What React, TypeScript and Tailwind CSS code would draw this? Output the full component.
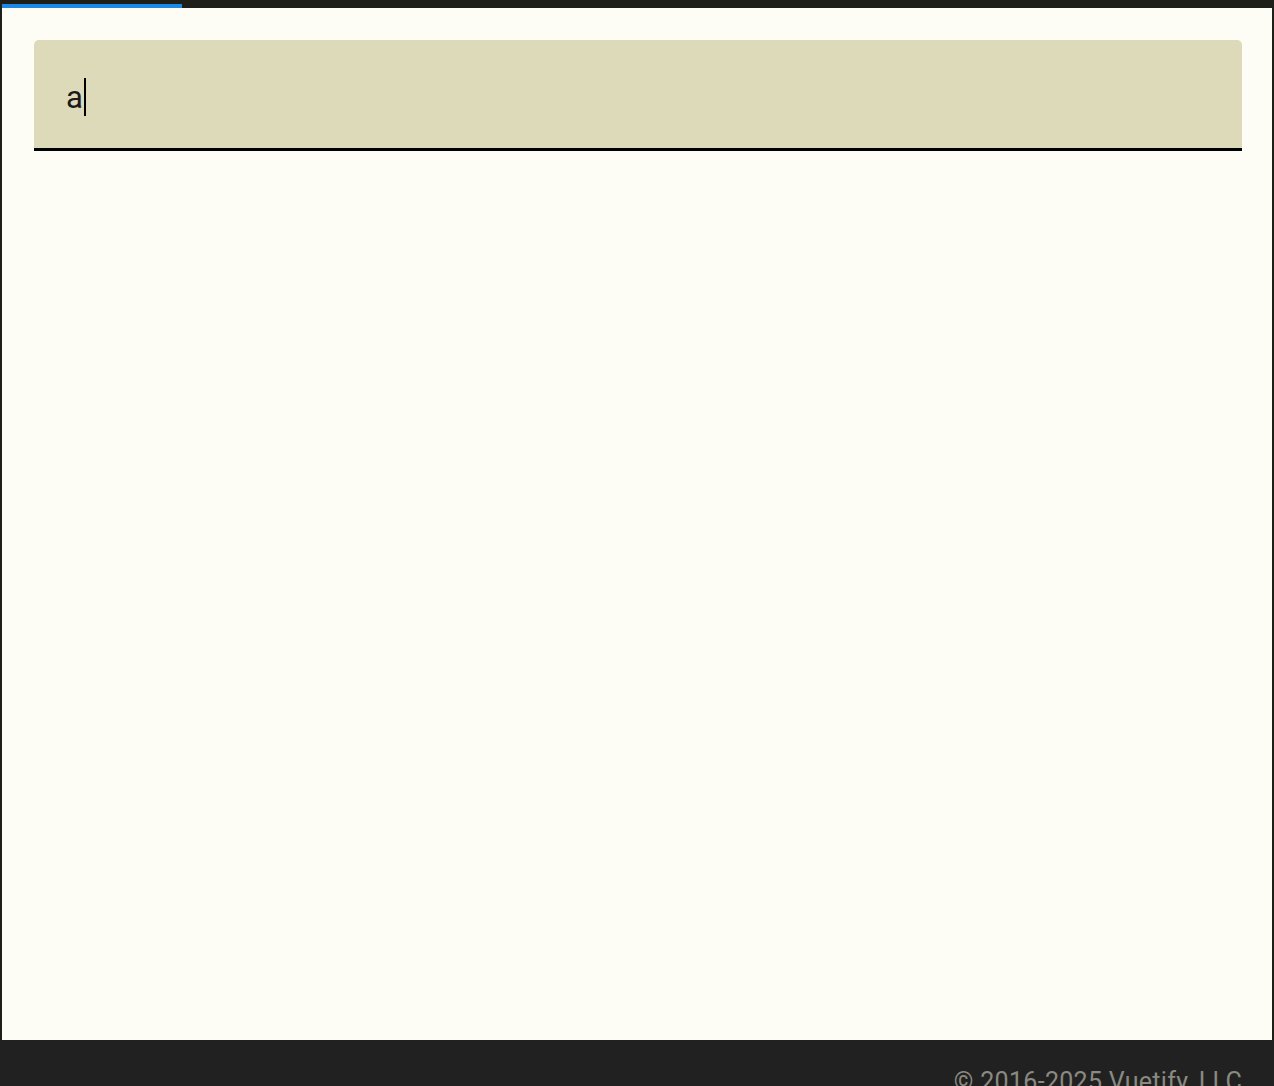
export default function App() {
  return (
    <div className="h-[1086px] w-[1274px] overflow-hidden bg-[#1f1f1a] flex flex-col font-['Roboto',sans-serif]">
      {/* top bar with progress */}
      <div className="h-2 flex items-end pl-[2px]">
        <div className="h-1 w-[180px] bg-[#1e88e5]" />
      </div>

      {/* main */}
      <div className="flex-1 mx-[2px] bg-[#fdfdf5] pt-8 pl-8 pr-[30px]">
        <div className="flex h-[111px] items-center rounded-t-[5px] border-b-[3px] border-black bg-[#dddab9] pl-8 pt-[6px]">
          <span className="text-[31px] leading-none text-[#1a1a1a]">a</span>
          <span className="ml-[1px] h-[38px] w-[2px] bg-black" />
        </div>
      </div>

      {/* footer */}
      <footer className="h-[46px] bg-[#212121] flex justify-end pr-[32px] pt-[24px]">
        <span className="text-[25px] leading-[36px] text-[#8a8a80] tracking-[0.3px] whitespace-nowrap">
          © 2016-2025 Vuetify, LLC
        </span>
      </footer>
    </div>
  );
}
